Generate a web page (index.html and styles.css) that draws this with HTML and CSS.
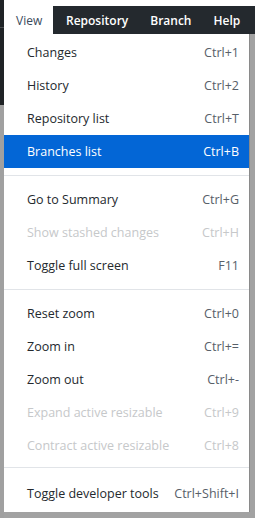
FILE: index.html
```html
<!DOCTYPE html>
<html>
<head>
<meta charset="utf-8">
<link rel="stylesheet" href="styles.css">
</head>
<body>
<div class="screen">
  <div class="edge"></div>
  <div class="main">
    <div class="menubar">
      <div class="tab active">View</div>
      <div class="bar">
        <div class="bar-top"></div>
        <div class="bar-items">
          <div class="tab">Repository</div>
          <div class="tab">Branch</div>
          <div class="tab">Help</div>
        </div>
      </div>
    </div>
    <div class="below">
      <div class="menu">
        <div class="item"><span>Changes</span><span class="key">Ctrl+1</span></div>
        <div class="item"><span>History</span><span class="key">Ctrl+2</span></div>
        <div class="item"><span>Repository list</span><span class="key">Ctrl+T</span></div>
        <div class="item selected"><span>Branches list</span><span class="key">Ctrl+B</span></div>
        <div class="sep"></div>
        <div class="item"><span>Go to Summary</span><span class="key">Ctrl+G</span></div>
        <div class="item disabled"><span>Show stashed changes</span><span class="key">Ctrl+H</span></div>
        <div class="item"><span>Toggle full screen</span><span class="key">F11</span></div>
        <div class="sep"></div>
        <div class="item"><span>Reset zoom</span><span class="key">Ctrl+0</span></div>
        <div class="item"><span>Zoom in</span><span class="key">Ctrl+=</span></div>
        <div class="item"><span>Zoom out</span><span class="key">Ctrl+-</span></div>
        <div class="item disabled"><span>Expand active resizable</span><span class="key">Ctrl+9</span></div>
        <div class="item disabled"><span>Contract active resizable</span><span class="key">Ctrl+8</span></div>
        <div class="sep sep-last"></div>
        <div class="item"><span>Toggle developer tools</span><span class="key">Ctrl+Shift+I</span></div>
      </div>
      <div class="shade"></div>
    </div>
  </div>
</div>
</body>
</html>
```
FILE: styles.css
```css
html, body {
  margin: 0;
  padding: 0;
  background: #a2a2a2;
}
.screen {
  display: flex;
  width: 255px;
  height: 518px;
  overflow: hidden;
  font-family: "Open Sans", "Noto Sans", sans-serif;
  font-size: 12px;
  background: #a2a2a2;
}
.edge {
  width: 4px;
  flex: none;
  background: linear-gradient(#1f2326 0 27px, #4a4d50 27px 28px, #1f2326 28px 105px, #a0a0a0 105px);
}
.main {
  flex: 1;
  display: flex;
  flex-direction: column;
}
.menubar {
  display: flex;
  height: 34px;
}
.tab {
  padding: 0 11px;
  display: flex;
  align-items: center;
  color: #ffffff;
  font-weight: 600;
}
.tab.active {
  width: 49px;
  box-sizing: border-box;
  padding: 6px 0 0 12px;
  background: #ffffff;
  color: #3a4a5c;
  font-weight: 400;
}
.bar {
  flex: 1;
  display: flex;
  flex-direction: column;
}
.bar-top {
  height: 6px;
  background: #ffffff;
}
.bar-items {
  flex: 1;
  display: flex;
  background: #24292e;
  padding-left: 2px;
}
.below {
  flex: 1;
  display: flex;
  align-items: flex-start;
}
.menu {
  width: 246px;
  box-sizing: border-box;
  background: #ffffff;
  padding: 2px 0 2px;
  border-right: 1px solid #8a8a8a;
}
.shade {
  flex: 1;
}
.item {
  height: 33px;
  display: flex;
  align-items: center;
  justify-content: space-between;
  padding: 0 10px 0 23px;
  color: #24292e;
  font-size: 12.5px;
}
.key {
  color: #586069;
}
.item.selected {
  background: #0366d6;
  color: #ffffff;
}
.item.selected .key {
  color: #ffffff;
}
.item.disabled,
.item.disabled .key {
  color: #c6c8ca;
}
.sep {
  height: 1px;
  background: #e1e4e8;
  margin: 7px 0;
}
.sep-last {
  margin: 5px 0 9px;
}
```
